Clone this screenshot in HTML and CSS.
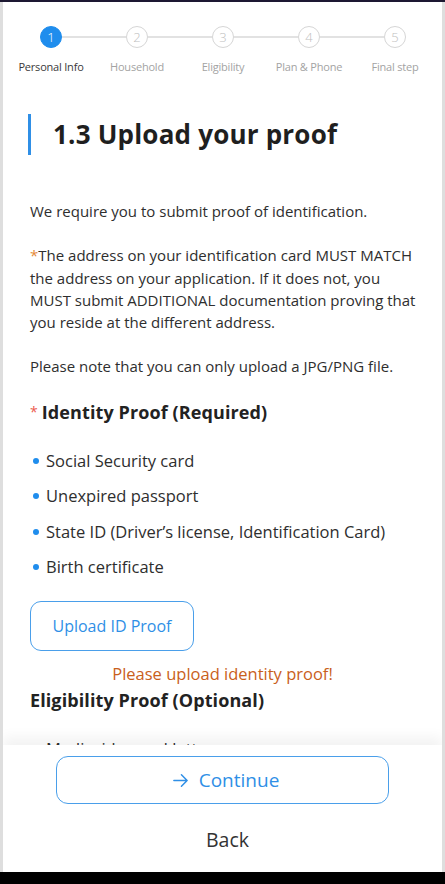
FILE: index.html
```html
<!DOCTYPE html>
<html lang="en">
<head>
  <meta charset="UTF-8" />
  <meta name="viewport" content="width=device-width, initial-scale=1" />
  <title>Upload your proof</title>
  <link rel="stylesheet" href="styles.css">
</head>
<body>
  <div class="topbar"></div>
  <div class="modal">
    <div class="content">
      <ol class="stepper">
        <li class="step active"><span class="dot">1</span><span class="label">Personal Info</span></li>
        <li class="step"><span class="dot">2</span><span class="label">Household</span></li>
        <li class="step"><span class="dot">3</span><span class="label">Eligibility</span></li>
        <li class="step"><span class="dot">4</span><span class="label">Plan &amp; Phone</span></li>
        <li class="step"><span class="dot">5</span><span class="label">Final step</span></li>
      </ol>

      <h1 class="title">1.3 Upload your proof</h1>

      <p class="text">We require you to submit proof of identification.</p>
      <p class="text"><span class="star">*</span>The address on your identification card MUST MATCH the address on your application. If it does not, you MUST submit ADDITIONAL documentation proving that you reside at the different address.</p>
      <p class="text">Please note that you can only upload a JPG/PNG file.</p>

      <h2 class="section"><span class="req">*</span>Identity Proof (Required)</h2>
      <ul class="docs">
        <li>Social Security card</li>
        <li>Unexpired passport</li>
        <li>State ID (Driver’s license, Identification Card)</li>
        <li>Birth certificate</li>
      </ul>

      <button class="upload">Upload ID Proof</button>
      <p class="error">Please upload identity proof!</p>

      <h2 class="section">Eligibility Proof (Optional)</h2>
      <ul class="docs">
        <li>Medicaid award letter</li>
      </ul>
    </div>

    <div class="footer">
      <button class="continue">
        <svg width="17" height="17" viewBox="0 0 18 18" fill="none" stroke="currentColor" stroke-width="1.6" stroke-linecap="round" stroke-linejoin="round"><path d="M2 9h14M10 3l6 6-6 6"/></svg>
        Continue
      </button>
      <button class="back">Back</button>
    </div>
  </div>
  <div class="bottombar"></div>
</body>
</html>
```

FILE: styles.css
```css
* { box-sizing: border-box; }
html, body { margin: 0; padding: 0; }
body {
  width: 445px;
  height: 884px;
  overflow: hidden;
  background: #dedede;
  font-family: "Open Sans", "Liberation Sans", sans-serif;
  color: #2b2b2b;
  display: flex;
  flex-direction: column;
}
.topbar { height: 2px; background: #1d1832; }
.bottombar { height: 12px; background: #000; }

.modal {
  flex: 1;
  margin: 0 3px;
  background: #fff;
  display: flex;
  flex-direction: column;
  overflow: hidden;
}
.content {
  flex: 1;
  overflow: hidden;
  padding: 24px 20px 0 27px;
}

/* stepper */
.stepper {
  list-style: none;
  margin: 0 -22px 0 -22px;
  padding: 0;
  display: grid;
  grid-template-columns: repeat(5, 86px);
}
.step {
  position: relative;
  display: flex;
  flex-direction: column;
  align-items: center;
}
.step + .step::before {
  content: "";
  position: absolute;
  top: 10px;
  left: calc(-50% + 11px);
  right: calc(50% + 11px);
  height: 1.5px;
  background: #e2e2e2;
}
.dot {
  width: 22px;
  height: 22px;
  border-radius: 50%;
  border: 1px solid #d6d6d6;
  color: #c0c0c0;
  font-size: 13px;
  font-weight: 300;
  display: flex;
  align-items: center;
  justify-content: center;
}
.step.active .dot { background: #1f8ded; border-color: #1f8ded; color: #fff; }
.label {
  margin-top: 11px;
  font-size: 11px;
  color: #a3a3a3;
  white-space: nowrap;
  letter-spacing: -0.2px;
}
.step.active .label { color: #3a3a3a; }

/* heading */
.title {
  margin: 40px 0 45px -2px;
  border-left: 3px solid #2f8fe6;
  padding: 6px 0 6px 22px;
  font-size: 26px;
  font-weight: 700;
  color: #1f1f1f;
  line-height: 29px;
  letter-spacing: 0.2px;
}

.text {
  margin: 0 0 22px;
  font-size: 15px;
  line-height: 22.3px;
  color: #2e2e2e;
}
.star { color: #e58a3a; }

.section {
  margin: 0 0 19px;
  font-size: 18px;
  font-weight: 700;
  color: #222;
  letter-spacing: 0.1px;
}
.req {
  color: #ec5a4f;
  font-size: 14px;
  font-weight: 400;
  margin-right: 4px;
  vertical-align: 2px;
}

.docs {
  list-style: none;
  margin: 0 0 16px;
  padding: 0;
}
.docs li {
  position: relative;
  padding-left: 16px;
  font-size: 16.5px;
  line-height: 35.5px;
  color: #2e2e2e;
}
.docs li::before {
  content: "";
  position: absolute;
  left: 3px;
  top: 15px;
  width: 6px;
  height: 6px;
  border-radius: 50%;
  background: #1f8ded;
}

button { font-family: inherit; cursor: pointer; }
.upload {
  width: 164px;
  height: 50px;
  border: 1px solid #4a9fea;
  border-radius: 11px;
  background: #fff;
  color: #2f8fe6;
  font-size: 16px;
}
.error {
  margin: 11px 7px 3px 0;
  text-align: center;
  font-size: 16.5px;
  color: #c9601b;
}

/* footer */
.footer {
  position: relative;
  display: flex;
  flex-direction: column;
  align-items: center;
  padding: 11px 0 0;
  height: 127px;
  background: #fff;
  box-shadow: 0 -8px 12px rgba(0, 0, 0, 0.05);
}
.continue {
  width: 333px;
  height: 48px;
  padding-left: 12px;
  border: 1px solid #4a9fea;
  border-radius: 12px;
  background: #fff;
  color: #2f8fe6;
  font-size: 19px;
  display: flex;
  align-items: center;
  justify-content: center;
  gap: 10px;
}
.back {
  margin-top: 18px;
  border: none;
  background: none;
  font-size: 19.5px;
  color: #333;
  padding: 4px 10px 4px 20px;
}
```
